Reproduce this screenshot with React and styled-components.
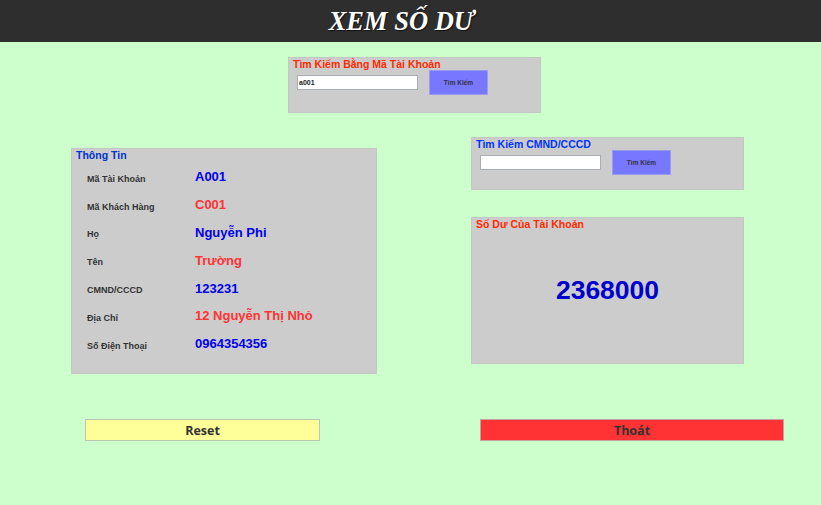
import React, { useState } from "react";
import styled, { createGlobalStyle } from "styled-components";

const GlobalStyle = createGlobalStyle`
  html, body {
    margin: 0;
    padding: 0;
    background: #ccffcc;
  }
  body {
    font-family: "Liberation Sans", Arial, sans-serif;
  }
`;

const info = [
  { label: "Mã Tài Khoản", value: "A001", tone: "blue" },
  { label: "Mã Khách Hàng", value: "C001", tone: "red" },
  { label: "Họ", value: "Nguyễn Phi", tone: "blue" },
  { label: "Tên", value: "Trường", tone: "red" },
  { label: "CMND/CCCD", value: "123231", tone: "blue" },
  { label: "Địa Chỉ", value: "12 Nguyễn Thị Nhỏ", tone: "red" },
  { label: "Số Điện Thoại", value: "0964354356", tone: "blue" },
];

const App = () => {
  const [maTK, setMaTK] = useState("a001");
  const [cmnd, setCmnd] = useState("");

  return (
    <Page>
      <GlobalStyle />
      <Header>
        <Title>XEM SỐ DƯ</Title>
      </Header>

      <Main>
        <TopRow>
          <SearchPanel $width={253} $height={56}>
            <PanelTitle $color="#ff2a00">Tìm Kiếm Bằng Mã Tài Khoản</PanelTitle>
            <SearchRow>
              <SearchInput value={maTK} onChange={(e) => setMaTK(e.target.value)} />
              <SearchButton>Tìm Kiếm</SearchButton>
            </SearchRow>
          </SearchPanel>
        </TopRow>

        <Columns>
          <LeftColumn>
            <InfoPanel>
              <PanelTitle $color="#0033cc">Thông Tin</PanelTitle>
              <InfoList>
                {info.map((row) => (
                  <InfoRow key={row.label}>
                    <Label>{row.label}</Label>
                    <Value $tone={row.tone}>{row.value}</Value>
                  </InfoRow>
                ))}
              </InfoList>
            </InfoPanel>
          </LeftColumn>

          <RightColumn>
            <SearchPanel $width={273} $height={53}>
              <PanelTitle $color="#0033ff">Tìm Kiếm CMND/CCCD</PanelTitle>
              <SearchRow>
                <SearchInput value={cmnd} onChange={(e) => setCmnd(e.target.value)} />
                <SearchButton>Tìm Kiếm</SearchButton>
              </SearchRow>
            </SearchPanel>

            <BalancePanel>
              <PanelTitle $color="#ff2a00">Số Dư Của Tài Khoản</PanelTitle>
              <Balance>2368000</Balance>
            </BalancePanel>
          </RightColumn>
        </Columns>

        <ButtonRow>
          <ActionButton $bg="#ffff99" $width={235} $border="#b8c8b0">
            Reset
          </ActionButton>
          <ActionButton $bg="#ff3333" $width={304} $border="#c8a0a0">
            Thoát
          </ActionButton>
        </ButtonRow>
      </Main>
    </Page>
  );
};

export default App;

const Page = styled.div`
  width: 821px;
  min-height: 505px;
  background: #ccffcc;
`;

const Header = styled.header`
  height: 42px;
  background: #2e2e2e;
  display: flex;
  align-items: center;
  justify-content: center;
  padding-right: 18px;
`;

const Title = styled.h1`
  margin: 0;
  color: #ffffff;
  font-family: "Liberation Serif", "Times New Roman", serif;
  font-style: italic;
  font-weight: 700;
  font-size: 26.5px;
  letter-spacing: 0;
  text-shadow: 1px 1px 1px rgba(0, 0, 0, 0.6);
`;

const Main = styled.main`
  padding-top: 15px;
`;

const TopRow = styled.div`
  display: flex;
  padding-left: 288px;
`;

const Panel = styled.section`
  background: #cccccc;
  border: 1px solid #c4c8c4;
  box-sizing: border-box;
  display: flex;
  flex-direction: column;
`;

const SearchPanel = styled(Panel)`
  width: ${({ $width }) => $width}px;
  height: ${({ $height }) => $height}px;
  padding: 0 0 0 4px;
`;

const PanelTitle = styled.div`
  color: ${({ $color }) => $color};
  font-size: 10.5px;
  font-weight: 700;
  line-height: 12px;
`;

const SearchRow = styled.div`
  display: flex;
  align-items: center;
  gap: 11px;
  padding-left: 4px;
  margin-top: 0;
`;

const SearchInput = styled.input`
  width: 121px;
  height: 15px;
  box-sizing: border-box;
  border: 1px solid #a8aeb4;
  border-radius: 0;
  padding: 0 1px;
  font-family: "Liberation Sans", Arial, sans-serif;
  font-size: 7px;
  font-weight: 700;
  color: #222;
  background: #ffffff;
  outline: none;
`;

const SearchButton = styled.button`
  width: 59px;
  height: 25px;
  box-sizing: border-box;
  background: #7777ff;
  border: 1px solid #9a9af0;
  color: #333344;
  font-family: "Liberation Sans", Arial, sans-serif;
  font-size: 6.5px;
  font-weight: 700;
  padding: 0;
  cursor: pointer;
`;

const Columns = styled.div`
  display: flex;
  align-items: flex-start;
  padding-left: 71px;
  gap: 94px;
`;

const LeftColumn = styled.div`
  margin-top: 35px;
`;

const RightColumn = styled.div`
  margin-top: 24px;
  display: flex;
  flex-direction: column;
  gap: 27px;
`;

const InfoPanel = styled(Panel)`
  width: 306px;
  height: 226px;
  padding: 0 0 0 4px;
`;

const InfoList = styled.div`
  display: flex;
  flex-direction: column;
  padding: 4px 0 0 11px;
`;

const InfoRow = styled.div`
  display: grid;
  grid-template-columns: 108px 1fr;
  align-items: center;
  height: 27.8px;
`;

const Label = styled.span`
  color: #333333;
  font-size: 9px;
  font-weight: 700;
`;

const Value = styled.span`
  color: ${({ $tone }) => ($tone === "red" ? "#ff3333" : "#0000ee")};
  font-size: 13px;
  font-weight: 700;
  position: relative;
  top: -2px;
`;

const BalancePanel = styled(Panel)`
  width: 273px;
  height: 147px;
  padding: 0 0 0 4px;
`;

const Balance = styled.div`
  flex: 1;
  display: flex;
  align-items: center;
  justify-content: center;
  color: #0000cc;
  font-size: 26.5px;
  font-weight: 700;
  padding-bottom: 12px;
  padding-right: 4px;
`;

const ButtonRow = styled.div`
  display: flex;
  padding-left: 85px;
  gap: 160px;
  margin-top: 45px;
`;

const ActionButton = styled.button`
  width: ${({ $width }) => $width}px;
  height: 22px;
  box-sizing: border-box;
  background: ${({ $bg }) => $bg};
  border: 1px solid ${({ $border }) => $border};
  color: #333333;
  font-family: "Open Sans", "Liberation Sans", sans-serif;
  font-size: 12.5px;
  font-weight: 700;
  padding: 0;
  cursor: pointer;
`;
